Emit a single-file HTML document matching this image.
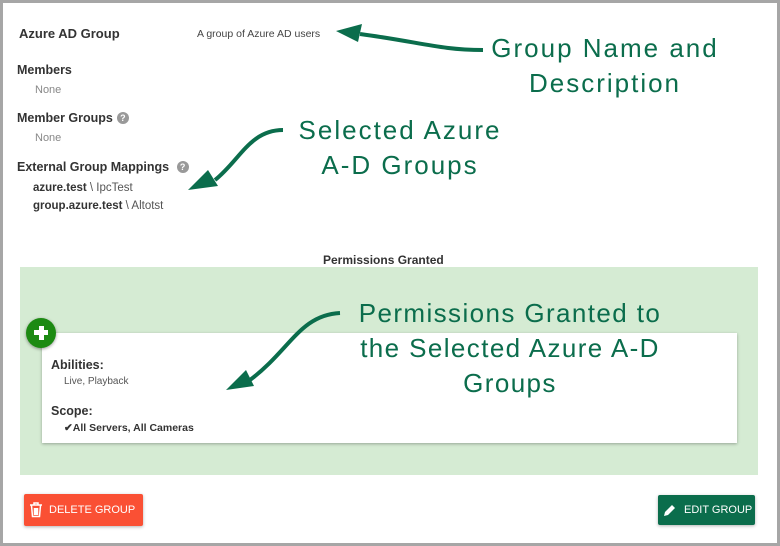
<!DOCTYPE html>
<html><head><style>
*{margin:0;padding:0;box-sizing:border-box}
body{width:780px;height:546px;overflow:hidden;background:#a6a6a6;font-family:"Liberation Sans",sans-serif;position:relative}
#f{position:absolute;left:3px;top:3px;width:774px;height:540px;background:#fff}
.a{position:absolute;white-space:nowrap}
.lbl{font-size:13px;font-weight:bold;color:#333}
.val{font-size:11px;color:#888}
.ann{position:absolute;color:#0b6d4c;font-size:26px;text-align:center;line-height:35px;letter-spacing:2px;white-space:nowrap}
.q{display:inline-block;width:12px;height:12px;border-radius:50%;background:#999;color:#fff;font-size:9px;text-align:center;line-height:12px;vertical-align:1px;margin-left:4px}
</style></head><body>
<div id="f"></div>
<div class="a lbl" style="left:19px;top:26px">Azure AD Group</div>
<div class="a" style="left:197px;top:28px;font-size:10.5px;color:#444">A group of Azure AD users</div>
<div class="a lbl" style="left:17px;top:63px;font-size:12.5px">Members</div>
<div class="a val" style="left:35px;top:84px">None</div>
<div class="a lbl" style="left:17px;top:111px;font-size:12.5px">Member Groups<span class="q">?</span></div>
<div class="a val" style="left:35px;top:132px">None</div>
<div class="a lbl" style="left:17px;top:160px;font-size:12.5px">External Group Mappings <span class="q">?</span></div>
<div class="a" style="left:33px;top:182px;font-size:11.5px;color:#555"><b style="color:#333">azure.test</b> \ IpcTest</div>
<div class="a" style="left:33px;top:200px;font-size:11.5px;color:#555"><b style="color:#333">group.azure.test</b> \ Altotst</div>
<div class="a" style="left:323px;top:253px;font-size:12px;font-weight:bold;color:#333">Permissions Granted</div>
<div class="a" style="left:20px;top:267px;width:738px;height:208px;background:#d5ebd3"></div>
<div class="a" style="left:42px;top:333px;width:695px;height:110px;background:#fff;box-shadow:0 1px 3px rgba(0,0,0,.3)"></div>
<div class="a" style="left:26px;top:318px;width:30px;height:30px;border-radius:50%;background:#1c8a12;box-shadow:0 1px 3px rgba(0,0,0,.4)"></div>
<div class="a" style="left:34px;top:330px;width:14px;height:5px;background:#fff"></div>
<div class="a" style="left:38.5px;top:326px;width:5px;height:14px;background:#fff"></div>
<div class="a lbl" style="left:51px;top:358px;font-size:12.5px">Abilities:</div>
<div class="a" style="left:64px;top:376px;font-size:10px;color:#555">Live, Playback</div>
<div class="a lbl" style="left:51px;top:404px;font-size:12.5px">Scope:</div>
<div class="a" style="left:64px;top:422px;font-size:10.5px;font-weight:bold;color:#333">✔All Servers, All Cameras</div>
<div class="a" style="left:24px;top:494px;width:119px;height:32px;background:#fa5034;border-radius:2px;box-shadow:0 1px 3px rgba(0,0,0,.3);color:#fff;font-size:11px;line-height:32px;padding-left:25px">DELETE GROUP</div>
<svg class="a" style="left:29px;top:502px" width="14" height="16"><g fill="none" stroke="#fff" stroke-width="1.5"><path d="M1 3h12M5 3V1h4v2M2.5 3.5l1 11h7l1-11M5.5 6v7M7 6v7M8.5 6v7"/></g></svg>
<div class="a" style="left:658px;top:495px;width:97px;height:30px;background:#0b6d4c;border-radius:2px;box-shadow:0 1px 3px rgba(0,0,0,.3);color:#fff;font-size:11px;line-height:30px;padding-left:26px">EDIT GROUP</div>
<svg class="a" style="left:662px;top:502px" width="16" height="16"><path d="M2 14l1-4 7-7 3 3-7 7z" fill="#fff"/></svg>
<div class="ann" style="left:470px;top:31px;width:270px">Group Name and<br>Description</div>
<div class="ann" style="left:270px;top:113px;width:260px">Selected Azure<br>A-D Groups</div>
<div class="ann" style="left:320px;top:296px;width:380px;letter-spacing:1.4px">Permissions Granted to<br>the Selected Azure A-D<br>Groups</div>
<svg class="a" style="left:0;top:0" width="780" height="546">
<g fill="none" stroke="#0b6d4c" stroke-width="4">
<path d="M483 50 C440 50 420 42 360 34"/>
<path d="M283 130 C250 130 240 160 215 180"/>
<path d="M340 313 C300 315 290 350 250 380"/>
</g>
<g fill="#0b6d4c">
<path d="M336 31 L362 24 L358 42z"/>
<path d="M188 190 L208 170 L218 186z"/>
<path d="M226 390 L246 370 L254 386z"/>
</g>
</svg>
</body></html>
